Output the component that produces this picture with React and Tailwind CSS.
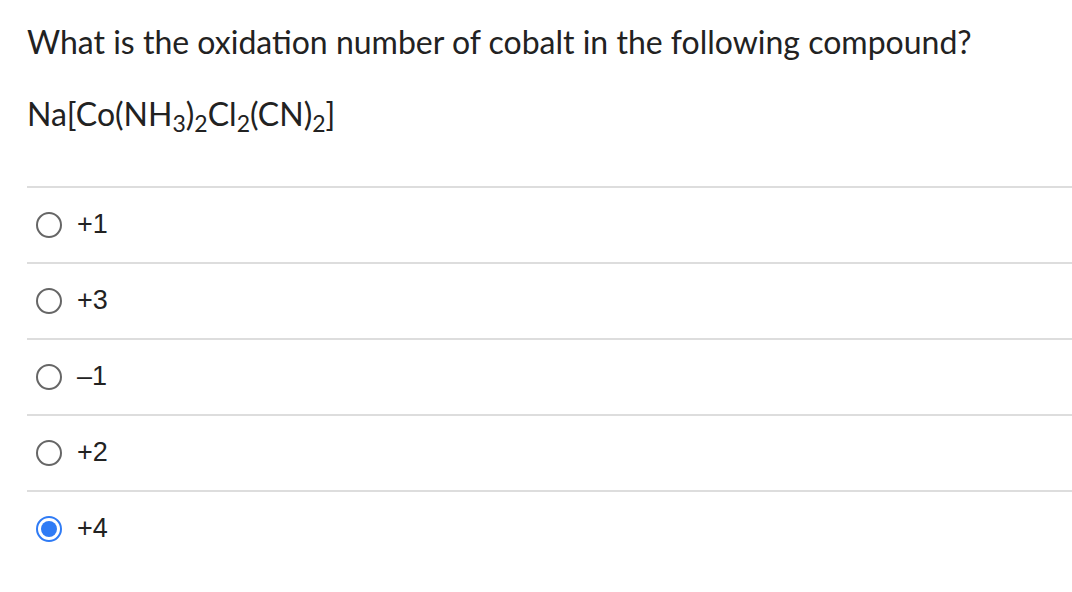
import React from "react";

const options = [
  { label: "+1", checked: false },
  { label: "+3", checked: false },
  { label: "–1", checked: false },
  { label: "+2", checked: false },
  { label: "+4", checked: true },
];

const Radio = ({ checked }) =>
  checked ? (
    <span className="w-[26px] h-[26px] rounded-full border-[2px] border-[#2f7bf5] flex items-center justify-center shrink-0">
      <span className="w-[16px] h-[16px] rounded-full bg-[#2f7bf5]" />
    </span>
  ) : (
    <span className="w-[26px] h-[26px] rounded-full border-[2px] border-[#666] shrink-0" />
  );

export default function App() {
  return (
    <div className="w-[1072px] h-[592px] bg-white pl-[27px] pt-[22px] text-[#222]">
      <p className="font-['Lato',sans-serif] text-[32px] leading-[40px]">
        What is the oxidation number of cobalt in the following compound?
      </p>
      <p className="font-['Lato',sans-serif] text-[32px] leading-[40px] mt-[32px]">
        Na[Co(NH<sub className="text-[23px]">3</sub>)<sub className="text-[23px]">2</sub>Cl
        <sub className="text-[23px]">2</sub>(CN)<sub className="text-[23px]">2</sub>]
      </p>
      <div className="mt-[52px]">
        {options.map((o, i) => (
          <div
            key={i}
            className="h-[76px] flex items-center gap-[15px] pl-[9px] border-t-[2px] border-[#dddddd]"
          >
            <Radio checked={o.checked} />
            <span className="font-['Liberation_Sans',Arial,sans-serif] text-[27px] text-[#222] -mt-[1px]">
              {o.label}
            </span>
          </div>
        ))}
      </div>
    </div>
  );
}
